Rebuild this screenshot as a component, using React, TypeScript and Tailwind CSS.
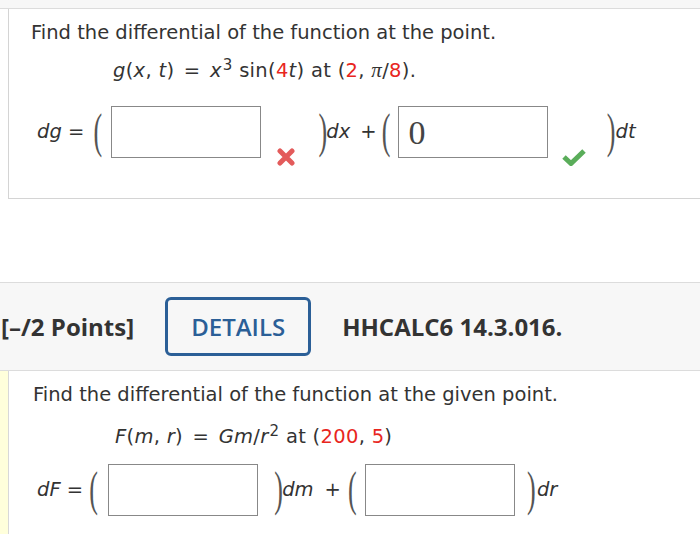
import React from 'react';

const serif = { fontFamily: '"DejaVu Sans", Verdana, sans-serif' };

const Paren = ({ ch, className = '' }: { ch: string; className?: string }) => (
    <span
        className={`inline-flex w-[19px] justify-center text-[26px] leading-none text-[#555] scale-y-[1.9] font-['Liberation_Serif',serif] ${className}`}
    >
        {ch}
    </span>
);

const AnswerBox = ({ value, className = '' }: { value?: string; className?: string }) => (
    <div
        className={`flex h-[52px] w-[150px] shrink-0 items-center border border-[#888] bg-white pl-[10px] text-[34px] text-[#444] font-['Liberation_Serif',serif] ${className}`}
    >
        {value}
    </div>
);

const WrongMark = () => (
    <svg width="20" height="18" viewBox="0 0 20 18">
        <path d="M4 3 L16 15 M16 3 L4 15" stroke="#e35b5b" strokeWidth="5" strokeLinecap="round" />
    </svg>
);

const RightMark = () => (
    <svg width="24" height="18" viewBox="0 0 24 18">
        <path d="M2 9 L9 15.5 L22 3" stroke="#5aad5a" strokeWidth="5" fill="none" strokeLinejoin="miter" />
    </svg>
);

const Red = ({ children }: { children: React.ReactNode }) => <span className="text-[#e8261e]">{children}</span>;

const Eq = () => <span className="mx-[3px]">=</span>;

export default function App() {
    return (
        <div className="h-[534px] w-[700px] overflow-hidden bg-white text-[19.5px] text-[#333]" style={serif}>
            {/* top strip */}
            <div className="h-[9px] border-b border-[#dcdcdc] bg-[#f7f7f7]" />

            {/* first question */}
            <div className="ml-2 h-[190px] border-b border-l border-[#d4d4d4] bg-white">
                <p className="pl-[22px] pt-[12px] leading-[24px]">Find the differential of the function at the point.</p>
                <p className="mt-[13px] pl-[104px] leading-[24px] tracking-[0.3px]">
                    <i>g</i>(<i>x</i>, <i>t</i>) <Eq /> <i>x</i>
                    <sup className="ml-[1px] text-[15px] leading-none">3</sup> sin(<Red>4</Red>
                    <i>t</i>) at (<Red>2</Red>, <i className="font-['Liberation_Serif',serif] text-[21px]">π</i>/<Red>8</Red>).
                </p>
                <div className="mt-[23px] flex h-[52px] items-center pl-[28px]">
                    <span>
                        <i>dg</i> =
                    </span>
                    <Paren ch="(" className="ml-[4px]" />
                    <AnswerBox className="ml-[4px]" />
                    <div className="flex h-[52px] w-[50px] items-end pl-[15px]">
                        <div className="-mb-[8px]">
                            <WrongMark />
                        </div>
                    </div>
                    <Paren ch=")" className="ml-[2px] w-[10px]" />
                    <i className="-ml-[6px]">dx</i>
                    <span className="ml-[10px]">+</span>
                    <Paren ch="(" />
                    <AnswerBox value="0" className="ml-[2px]" />
                    <div className="flex h-[52px] w-[52px] items-end pl-[14px]">
                        <div className="-mb-[8px]">
                            <RightMark />
                        </div>
                    </div>
                    <Paren ch=")" className="ml-[2px] w-[10px]" />
                    <i className="-ml-[5px]">dt</i>
                </div>
            </div>

            {/* header bar */}
            <div className="mt-[83px] flex h-[89px] items-center border-y border-[#dcdcdc] bg-[#f7f7f7] font-['Open_Sans',sans-serif] text-[24px] text-[#333]">
                <span className="ml-[1px] font-bold">[–/2 Points]</span>
                <button className="ml-[31px] flex h-[59px] w-[146px] items-center justify-center rounded-md border-[3px] border-[#2b5f97] font-semibold text-[#2b5f97]">
                    DETAILS
                </button>
                <span className="ml-[31px] font-bold">HHCALC6 14.3.016.</span>
            </div>

            {/* second question */}
            <div className="flex h-[200px]">
                <div className="w-2 shrink-0 bg-[#ffffdb]" />
                <div className="flex-1 border-l border-[#d8d8d8]">
                    <p className="pl-[24px] pt-[12px] leading-[24px]">Find the differential of the function at the given point.</p>
                    <p className="mt-[18px] pl-[106px] leading-[24px] tracking-[0.3px]">
                        <i>F</i>(<i>m</i>, <i>r</i>) <Eq /> <i>Gm</i>/<i>r</i>
                        <sup className="ml-[1px] text-[15px] leading-none">2</sup> at (<Red>200</Red>, <Red>5</Red>)
                    </p>
                    <div className="mt-[15px] flex h-[52px] items-center pl-[28px]">
                        <span>
                            <i>dF</i> =
                        </span>
                        <Paren ch="(" className="ml-[1px]" />
                        <AnswerBox className="ml-[5px]" />
                        <Paren ch=")" className="ml-[11px] w-[10px]" />
                        <i className="-ml-[6px]">dm</i>
                        <span className="ml-[11px]">+</span>
                        <Paren ch="(" className="ml-[2px]" />
                        <AnswerBox className="ml-[3px]" />
                        <Paren ch=")" className="ml-[7px] w-[10px]" />
                        <i className="-ml-[4px]">dr</i>
                    </div>
                </div>
            </div>
        </div>
    );
}
